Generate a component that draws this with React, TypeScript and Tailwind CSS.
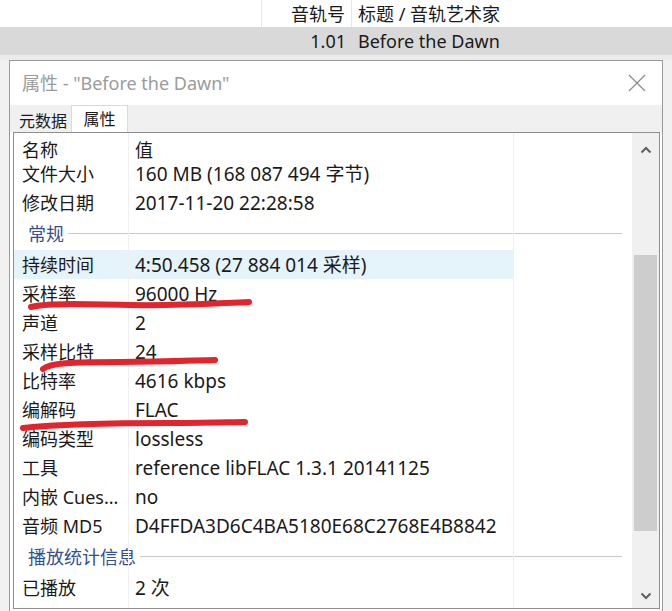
type Row =
  | { kind: "row"; name: string; value: string; hover?: boolean }
  | { kind: "group"; label: string };

const rows: Row[] = [
  { kind: "row", name: "修改日期", value: "2017-11-20 22:28:58" },
  { kind: "group", label: "常规" },
  { kind: "row", name: "持续时间", value: "4:50.458 (27 884 014 采样)", hover: true },
  { kind: "row", name: "采样率", value: "96000 Hz" },
  { kind: "row", name: "声道", value: "2" },
  { kind: "row", name: "采样比特", value: "24" },
  { kind: "row", name: "比特率", value: "4616 kbps" },
  { kind: "row", name: "编解码", value: "FLAC" },
  { kind: "row", name: "编码类型", value: "lossless" },
  { kind: "row", name: "工具", value: "reference libFLAC 1.3.1 20141125" },
  { kind: "row", name: "内嵌 Cues...", value: "no" },
  { kind: "row", name: "音频 MD5", value: "D4FFDA3D6C4BA5180E68C2768E4B8842" },
  { kind: "group", label: "播放统计信息" },
  { kind: "row", name: "已播放", value: "2 次" },
  { kind: "row", name: "首次播放", value: "" },
];

function Chevron({ down }: { down?: boolean }) {
  return (
    <svg width="12" height="8" viewBox="0 0 12 8" className={down ? "rotate-180" : ""}>
      <path d="M1.5 6.5 L6 2 L10.5 6.5" fill="none" stroke="#5f5f5f" strokeWidth="2" />
    </svg>
  );
}

function PropRow({ row }: { row: Row }) {
  if (row.kind === "group") {
    return (
      <div className="flex h-[33px] items-center pl-[14px] pr-[10px]">
        <span className="text-[18px] leading-[22px] text-[#34508e]">{row.label}</span>
        <div className="ml-[4px] h-px flex-1 bg-[#c8c8c8]" />
      </div>
    );
  }
  return (
    <div className="flex h-[29px] items-center">
      <div
        className={`flex h-full w-[499px] items-center ${row.hover ? "bg-[#e5f3fb]" : ""}`}
      >
        <div className="w-[114px] truncate pl-[8px]">{row.name}</div>
        <div className="pl-[7px] text-[19px]">{row.value}</div>
      </div>
    </div>
  );
}

export default function App() {
  return (
    <div className="relative h-[611px] w-[672px] overflow-hidden bg-[#f1f1f1] font-['Noto_Sans','Noto_Sans_CJK_SC',sans-serif] text-[18px] leading-[22px] text-[#1a1a1a]">
      {/* track list behind the dialog */}
      <div className="flex h-[27px] bg-white">
        <div className="w-[262px] border-r border-[#e6e6e6]" />
        <div className="flex w-[90px] items-center justify-end border-r border-[#e6e6e6] pr-[6px]">
          音轨号
        </div>
        <div className="flex items-center pl-[6px]">标题 / 音轨艺术家</div>
      </div>
      <div className="flex h-[28px] bg-[#d9d9d9]">
        <div className="w-[263px]" />
        <div className="flex w-[90px] items-center justify-end pr-[7px]">1.01</div>
        <div className="flex items-center pl-[5px]">Before the Dawn</div>
      </div>
      <div className="h-[5px] bg-[#ebebeb]" />

      {/* properties dialog */}
      <div className="ml-[9px] flex h-[553px] w-[654px] flex-col border border-[#9a9a9a] bg-white">
        <div className="flex h-[44px] shrink-0 items-center justify-between pl-[12px] pr-[16px]">
          <span className="text-[18px] text-[#9b9b9b]">属性 - "Before the Dawn"</span>
          <svg width="18" height="18" viewBox="0 0 18 18">
            <path d="M1 1 L17 17 M17 1 L1 17" stroke="#8a8a8a" strokeWidth="1.2" />
          </svg>
        </div>
        <div className="flex h-[27px] shrink-0 items-end bg-[#f0f0f0] pl-[5px]">
          <div className="flex h-[23px] w-[56px] items-center justify-center text-[16px]">
            元数据
          </div>
          <div className="flex h-[27px] w-[57px] items-center justify-center border-x border-t border-[#dadada] bg-white text-[16px]">
            属性
          </div>
        </div>

        <div className="ml-[3px] flex h-[477px] w-[647px] border border-[#8e8e8e]">
          <div className="relative w-[618px] overflow-hidden">
            <div className="absolute top-0 bottom-0 left-[114px] w-px bg-[#efefef]" />
            <div className="absolute top-0 bottom-0 left-[499px] w-px bg-[#efefef]" />
            <div className="flex h-[27px] items-center pt-[6px]">
              <div className="w-[114px] pl-[8px]">名称</div>
              <div className="pl-[7px]">值</div>
            </div>
            <div className="flex h-[28px] items-center">
              <div className="w-[114px] pl-[8px]">文件大小</div>
              <div className="pl-[7px] text-[19px]">160 MB (168 087 494 字节)</div>
            </div>
            {rows.map((r, i) => (
              <PropRow key={i} row={r} />
            ))}
          </div>
          <div className="flex w-[27px] flex-col bg-[#f0f0f0]">
            <div className="flex h-[34px] items-center justify-center">
              <Chevron />
            </div>
            <div className="h-[88px]" />
            <div className="mx-[2px] h-[276px] bg-[#cdcdcd]" />
            <div className="flex-1" />
            <div className="flex h-[24px] items-center justify-center">
              <Chevron down />
            </div>
          </div>
        </div>
      </div>

      {/* red marker strokes */}
      <svg
        className="pointer-events-none absolute top-0 left-0"
        width="672"
        height="611"
        viewBox="0 0 672 611"
      >
        <g fill="none" stroke="#e4232a" strokeWidth="6" strokeLinecap="round">
          <path d="M31 307 C 45 303, 80 304, 130 305 S 220 303, 249 302" />
          <path d="M43 369 C 50 363, 70 362, 120 362 S 200 360, 215 360" />
          <path d="M23 428 C 60 424, 120 423, 170 423 S 230 422, 245 422" />
        </g>
      </svg>
    </div>
  );
}
